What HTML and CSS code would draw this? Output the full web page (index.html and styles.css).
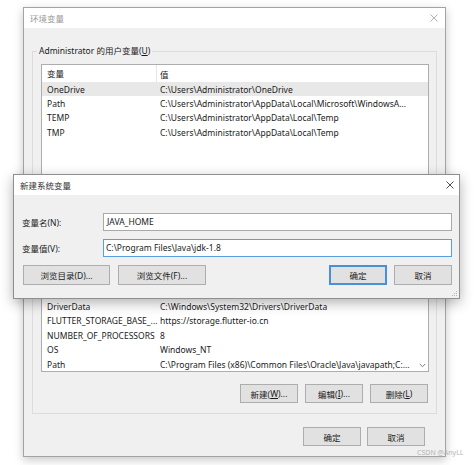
FILE: index.html
```html
<!DOCTYPE html>
<html lang="zh-CN">
<head>
    <meta charset="UTF-8">
    <title>环境变量</title>
    <link rel="stylesheet" href="styles.css">
</head>
<body>
<div class="window">
    <div class="titlebar inactive">
        <span>环境变量</span>
        <svg class="close" width="8" height="8" viewBox="0 0 8 8"><path d="M0.5 0.5 L7.5 7.5 M7.5 0.5 L0.5 7.5" stroke="#a8a8a8" stroke-width="0.9" fill="none"/></svg>
    </div>
    <div class="window-body">
        <fieldset class="group">
            <legend>Administrator 的用户变量(<u>U</u>)</legend>
            <div class="list list-user">
                <div class="row head"><span class="cell">变量</span><span class="cell">值</span></div>
                <div class="row selected"><span class="cell">OneDrive</span><span class="cell">C:\Users\Administrator\OneDrive</span></div>
                <div class="row"><span class="cell">Path</span><span class="cell">C:\Users\Administrator\AppData\Local\Microsoft\WindowsA...</span></div>
                <div class="row"><span class="cell">TEMP</span><span class="cell">C:\Users\Administrator\AppData\Local\Temp</span></div>
                <div class="row"><span class="cell">TMP</span><span class="cell">C:\Users\Administrator\AppData\Local\Temp</span></div>
            </div>
        </fieldset>

        <!-- system group: its title, header and first row sit under the dialog -->
        <fieldset class="group system">
            <div class="list list-covered">
                <div class="row"><span class="cell">DriverData</span><span class="cell">C:\Windows\System32\Drivers\DriverData</span></div>
                <div class="row"><span class="cell">FLUTTER_STORAGE_BASE_...</span><span class="cell">https://storage.flutter-io.cn</span></div>
                <div class="row"><span class="cell">NUMBER_OF_PROCESSORS</span><span class="cell">8</span></div>
                <div class="row"><span class="cell">OS</span><span class="cell">Windows_NT</span></div>
                <div class="row has-more">
                    <span class="cell">Path</span><span class="cell">C:\Program Files (x86)\Common Files\Oracle\Java\javapath;C:...</span>
                    <svg class="more" width="7" height="5" viewBox="0 0 7 5"><path d="M0.8 1 L3.5 3.7 L6.2 1" stroke="#666" stroke-width="0.9" fill="none"/></svg>
                </div>
            </div>
            <div class="buttons">
                <div class="btn small">新建(<u>W</u>)...</div>
                <div class="btn small">编辑(<u>I</u>)...</div>
                <div class="btn small">删除(<u>L</u>)</div>
            </div>
        </fieldset>

        <div class="buttons footer">
            <div class="btn small">确定</div>
            <div class="btn small">取消</div>
        </div>
    </div>
</div>

<div class="dialog">
    <div class="titlebar">
        <span>新建系统变量</span>
        <svg class="close" width="8" height="8" viewBox="0 0 8 8"><path d="M0.5 0.5 L7.5 7.5 M7.5 0.5 L0.5 7.5" stroke="#222" stroke-width="0.8" fill="none"/></svg>
    </div>
    <div class="dialog-body">
        <div class="field">
            <label>变量名(N):</label>
            <div class="input">JAVA_HOME</div>
        </div>
        <div class="field">
            <label>变量值(V):</label>
            <div class="input focused">C:\Program Files\Java\jdk-1.8</div>
        </div>
        <div class="dialog-buttons">
            <div class="btn wide">浏览目录(D)...</div>
            <div class="btn wide">浏览文件(F)...</div>
            <div class="spacer"></div>
            <div class="btn small default">确定</div>
            <div class="btn small">取消</div>
        </div>
    </div>
    <svg class="grip" width="5" height="5" viewBox="0 0 5 5">
        <rect x="4" y="0" width="1" height="1" fill="#b8b8b8"/>
        <rect x="2" y="2" width="1" height="1" fill="#b8b8b8"/>
        <rect x="4" y="2" width="1" height="1" fill="#b8b8b8"/>
        <rect x="0" y="4" width="1" height="1" fill="#b8b8b8"/>
        <rect x="2" y="4" width="1" height="1" fill="#b8b8b8"/>
        <rect x="4" y="4" width="1" height="1" fill="#b8b8b8"/>
    </svg>
</div>

<div class="watermark">CSDN @AnyLL</div>
</body>
</html>
```

FILE: styles.css
```css
body {
    margin: 0;
    width: 474px;
    height: 465px;
    overflow: hidden;
    position: relative;
    background-color: #ffffff;
    font-family: "Noto Sans", "Noto Sans CJK SC", sans-serif;
    font-size: 8.5px;
    color: #1a1a1a;
}
u { text-decoration: underline; text-underline-offset: 1px; }

/* background window */
.window { box-sizing: border-box; width: 423px; height: 450px; margin: 7px 0 0 23px; border: 1px solid #a3a3a3; background-color: #f0f0f0; box-shadow: 0 3px 9px rgba(0, 0, 0, 0.22); }
.titlebar { height: 20px; display: flex; align-items: center; justify-content: space-between; padding: 0 7px 0 6px; background-color: #ffffff; color: #333; }
.titlebar.inactive { color: #9a9a9a; }
.window-body { padding: 17px 8px 0 8px; }

.group { margin: 0; border: 1px solid #dcdcdc; padding: 7px 7px 41px 8px; }
.group legend { padding: 0 2px; margin-left: -4px; line-height: 12px; }
.group.system { margin-top: 8px; padding-top: 18px; padding-bottom: 10px; }

.list { box-sizing: border-box; width: 388px; background-color: #ffffff; border: 1px solid #adadad; }
.list-user { height: 134px; }
.list-covered { padding-top: 31.4px; }
.row { display: grid; grid-template-columns: 115px 259px; height: 14.4px; align-items: center; white-space: nowrap; }
.row.head { height: 17px; }
.row.head .cell:first-child { border-right: 1px solid #e5e5e5; height: 17px; line-height: 17px; box-sizing: border-box; }
.row.selected { background-color: #e8e8e8; }
.row.has-more { grid-template-columns: 115px 259px 12px; }
.cell { overflow: hidden; padding-left: 5px; }
.cell + .cell { padding-left: 3px; }
.more { justify-self: center; margin-top: 2px; }

.buttons { display: flex; justify-content: flex-end; gap: 7px; margin-top: 12px; padding-right: 1px; }
.footer { margin-top: 13px; padding-right: 12px; gap: 6px; }
.btn { box-sizing: border-box; height: 19px; display: flex; align-items: center; justify-content: center; background-color: #e1e1e1; border: 1px solid #adadad; }
.btn.small { width: 58px; }

/* front dialog */
.dialog { position: absolute; left: 13px; top: 174px; box-sizing: border-box; width: 447px; height: 125px; border: 1px solid #8f8f8f; background-color: #f0f0f0; box-shadow: 0 4px 12px rgba(0, 0, 0, 0.3); }
.dialog .titlebar { padding: 0 5px 0 6px; }
.dialog-body { padding: 18px 7px 0 8px; }
.field { display: flex; align-items: center; margin-bottom: 8px; }
.field label { width: 81px; }
.input { box-sizing: border-box; width: 349px; height: 18px; line-height: 16px; padding-left: 3px; background-color: #ffffff; border: 1px solid #a9a9a9; }
.input.focused { border-color: #5a9ee0; padding-left: 2px; }
.dialog-buttons { display: flex; align-items: center; gap: 7px; margin-top: 3px; padding-left: 1px; }
.dialog-buttons .btn { height: 20px; }
.btn.wide { width: 87px; }
.btn.wide + .btn.wide { width: 88px; margin-left: 1px; }
.spacer { flex: 1; }
.btn.default { border: 2px solid #4a90d9; }
.grip { position: absolute; right: 2px; bottom: 2px; }

.watermark { position: absolute; left: 417px; top: 448px; font-size: 7px; color: #b5b5b5; }
```
